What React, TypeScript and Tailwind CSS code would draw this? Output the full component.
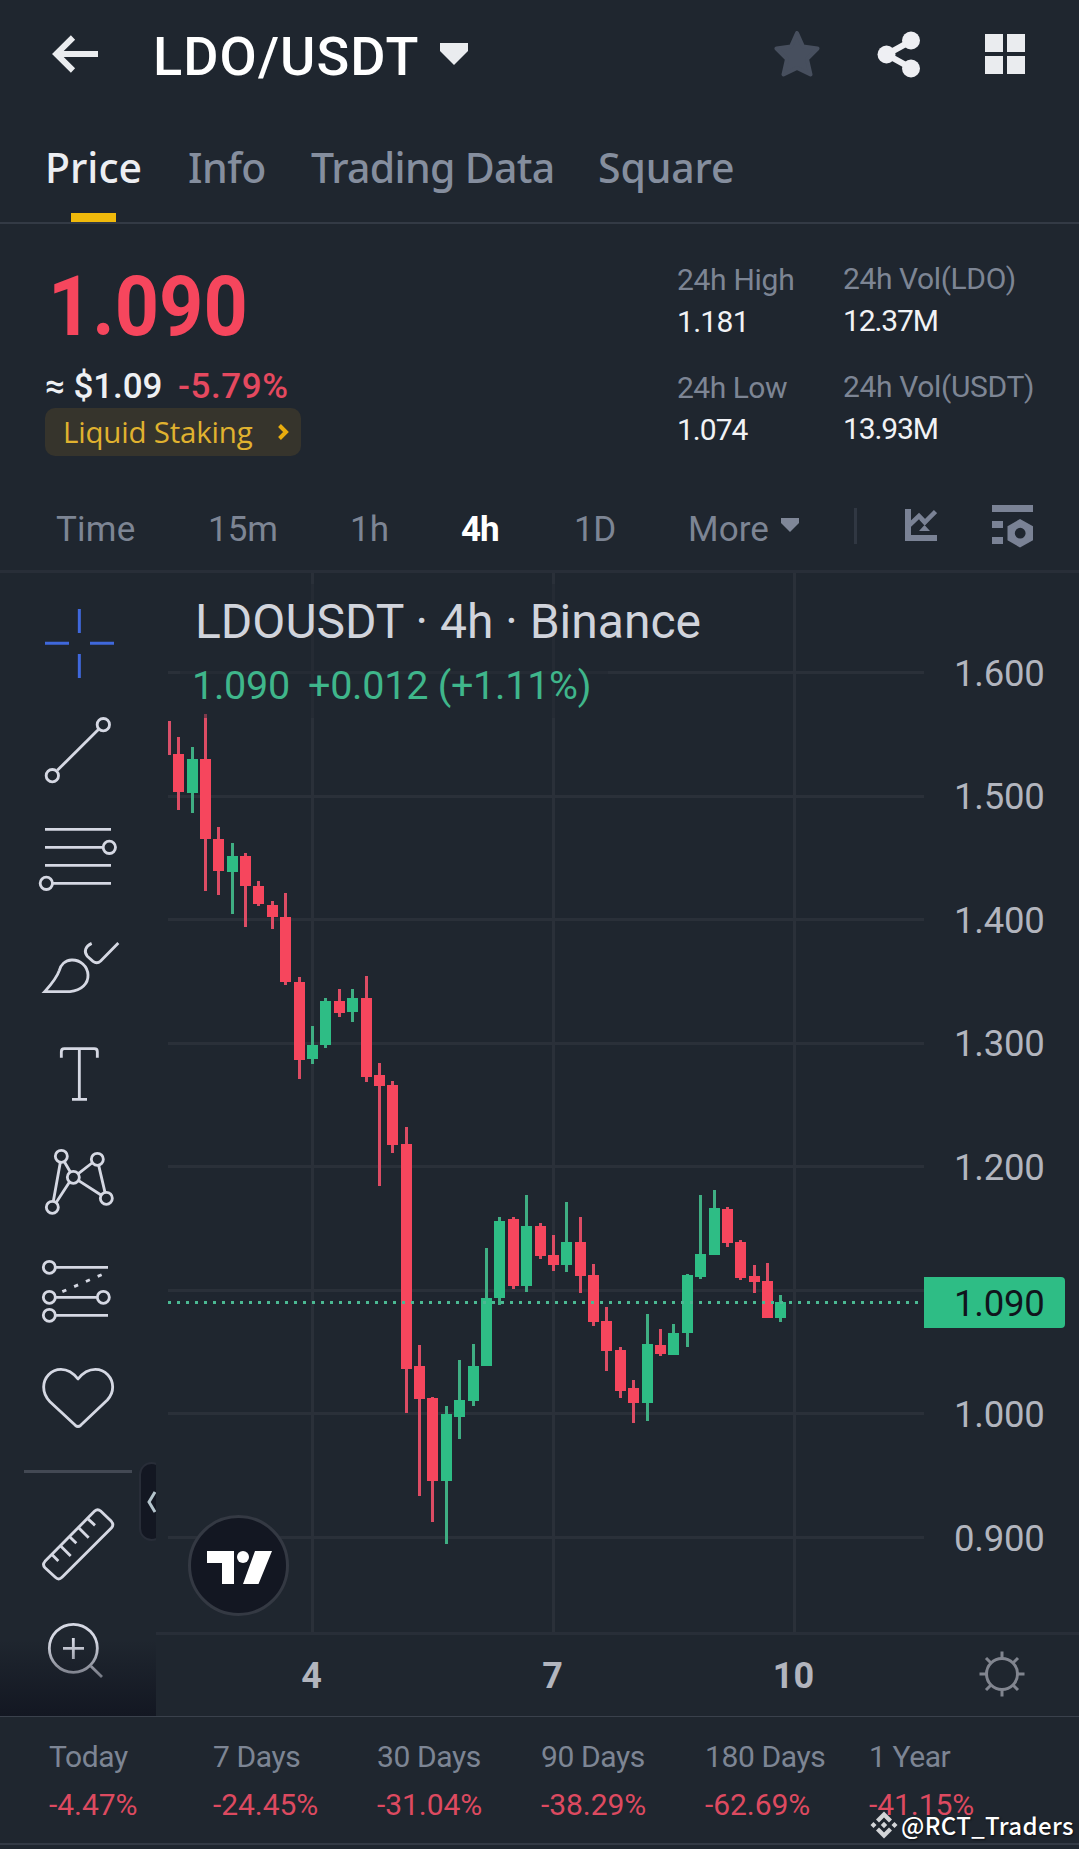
import React from 'react';

type Candle = [number, number, number, number, number, 'r' | 'g'];

// x centre, wick top, body top, body bottom, wick bottom, direction
const candles: Candle[] = [
  [178.5, 737, 754, 792, 810, 'r'], [192.5, 747, 759, 793, 813, 'g'], [205.5, 714, 759, 839, 891, 'r'],
  [218.5, 827, 839, 871, 895, 'r'], [232.5, 843, 856, 872, 914, 'g'], [245.5, 853, 856, 886, 927, 'r'],
  [258.5, 881, 886, 904, 906, 'r'], [272.5, 901, 905, 917, 929, 'r'], [285.5, 893, 917, 982, 985, 'r'],
  [299.5, 977, 982, 1060, 1079, 'r'], [312.5, 1026, 1045, 1059, 1064, 'g'], [325.5, 998, 1001, 1045, 1048, 'g'],
  [339.5, 989, 1001, 1013, 1017, 'r'], [352.5, 989, 998, 1012, 1022, 'g'], [366.5, 976, 998, 1077, 1082, 'r'],
  [379.5, 1063, 1075, 1086, 1186, 'r'], [392.5, 1081, 1085, 1145, 1153, 'r'], [406.5, 1127, 1144, 1369, 1413, 'r'],
  [419.5, 1345, 1366, 1399, 1496, 'r'], [432.5, 1397, 1398, 1481, 1522, 'r'], [446.5, 1406, 1414, 1481, 1544, 'g'],
  [459.5, 1360, 1400, 1417, 1439, 'g'], [473.5, 1344, 1366, 1401, 1406, 'g'], [486.5, 1248, 1298, 1366, 1366, 'g'],
  [499.5, 1217, 1221, 1298, 1305, 'g'], [513.5, 1217, 1219, 1286, 1289, 'r'], [526.5, 1195, 1226, 1286, 1292, 'g'],
  [540.5, 1223, 1226, 1256, 1259, 'r'], [553.5, 1235, 1255, 1265, 1271, 'r'], [566.5, 1202, 1242, 1265, 1272, 'g'],
  [580.5, 1217, 1242, 1276, 1293, 'r'], [593.5, 1264, 1275, 1322, 1326, 'r'], [606.5, 1307, 1321, 1351, 1371, 'r'],
  [620.5, 1347, 1350, 1391, 1398, 'r'], [633.5, 1380, 1388, 1403, 1423, 'r'], [647.5, 1314, 1344, 1403, 1421, 'g'],
  [660.5, 1329, 1345, 1354, 1356, 'r'], [673.5, 1324, 1333, 1355, 1355, 'g'], [687.5, 1274, 1275, 1333, 1347, 'g'],
  [700.5, 1195, 1254, 1277, 1279, 'g'], [714.5, 1190, 1208, 1255, 1255, 'g'], [727.5, 1207, 1209, 1243, 1247, 'r'],
  [740.5, 1240, 1242, 1278, 1280, 'r'], [754.5, 1265, 1276, 1282, 1293, 'r'], [767.5, 1263, 1281, 1318, 1318, 'r'],
  [780.5, 1295, 1302, 1318, 1322, 'g'],
];

const gridY = [672.5, 796.5, 919.5, 1043.5, 1166.5, 1290.5, 1413.5, 1537.5];
const gridX = [312.5, 553.5, 794.5];
const priceLabels = ['1.600', '1.500', '1.400', '1.300', '1.200', '', '1.000', '0.900'];

const periods = [
  ['Today', '-4.47%'], ['7 Days', '-24.45%'], ['30 Days', '-31.04%'],
  ['90 Days', '-38.29%'], ['180 Days', '-62.69%'], ['1 Year', '-41.15%'],
];

const Header = () => (
  <header className="flex h-[108px] items-center pl-[52px]">
    <svg className="h-[38px] w-[46px] shrink-0" viewBox="0 0 46 38" fill="none" stroke="#eaecef" strokeWidth="6">
      <path d="M46 19H5M21 2.500L4.300 19L21 35.500" />
    </svg>
    <h1 className="mt-[5px] ml-[55px] w-[287px] text-[54px] leading-none font-medium tracking-[1.1px] text-white">LDO/USDT</h1>
    <svg className="h-[22px] w-7 shrink-0" viewBox="0 0 28 22" fill="#eaecef"><path d="M0 0H28V8L14 22L0 8Z" /></svg>
    <svg className="ml-[306px] h-[47px] w-[46px] shrink-0" viewBox="0 0 46 47">
      <path d="M23 2L29 15.500L43.500 17.500L33 28L36.500 43.500L23 37L9.500 43.500L13 28L2.500 17.500L17 15.500Z" fill="#474f5e" stroke="#474f5e" strokeWidth="4" strokeLinejoin="round" />
    </svg>
    <svg className="ml-[57px] h-[47px] w-[43px] shrink-0" viewBox="0 0 43 47" fill="#eeeff3" stroke="#eeeff3">
      <path d="M34 10L9.500 23.500L34 37" fill="none" strokeWidth="6" />
      <circle cx="9.500" cy="23.500" r="9" stroke="none" />
      <circle cx="34" cy="9.500" r="9" stroke="none" />
      <circle cx="34" cy="37.500" r="9" stroke="none" />
    </svg>
    <div className="ml-[65px] grid grid-cols-2 gap-1">
      {[0, 1, 2, 3].map((i) => <span key={i} className="size-[18px] bg-[#eaecef]" />)}
    </div>
  </header>
);

const Tabs = () => (
  <nav className="flex h-[116px] items-center border-b-2 border-[#333a45] pt-1 pl-[45px] font-['Noto_Sans',sans-serif] text-[41px] leading-none font-medium text-[#858e9e]">
    <span className="w-[143px] text-[#eceef2]">Price</span>
    <span className="w-[123px] tracking-[-0.5px]">Info</span>
    <span className="w-[287px] tracking-[-0.7px]">Trading Data</span>
    <span className="tracking-[-0.15px]">Square</span>
  </nav>
);

const Stat = ({ label, value, labelClass, valueClass }: { label: string; value: string; labelClass: string; valueClass: string }) => (
  <div className="text-[30px] leading-[42px]">
    <div className={`text-[#7d8594] ${labelClass}`}>{label}</div>
    <div className={`text-[#f1f2f5] ${valueClass}`}>{value}</div>
  </div>
);

const PriceSummary = () => (
  <section className="flex h-[263px]">
    <div className="w-[677px] pt-[53px] pl-[45px]">
      <div className="ml-[3px] w-fit origin-left scale-x-[0.92] text-[84px] leading-[60px] font-bold text-[#f6465d]">1.090</div>
      <div className="mt-8 flex text-[35px] leading-9 font-medium">
        <span className="w-[133px] tracking-[-0.1px] text-[#eef0f3]">≈ $1.09</span>
        <span className="tracking-[0.6px] text-[#e5495f]">-5.79%</span>
      </div>
      <div className="mt-[3px] flex h-12 w-[256px] items-center rounded-[10px] bg-[#36342c]">
        <span className="ml-[18px] w-[215px] font-['Open_Sans',sans-serif] text-[29.5px] leading-none tracking-[-0.2px] text-[#e0b22f]">Liquid Staking</span>
        <svg className="h-4 w-[11px]" viewBox="0 0 11 16" fill="none" stroke="#e8ac0e" strokeWidth="4"><path d="M1.500 1.500L8 8L1.500 14.500" /></svg>
      </div>
    </div>
    <div className="flex w-[166px] flex-col gap-6 pt-[35px]">
      <Stat label="24h High" value="1.181" labelClass="tracking-[-0.3px]" valueClass="tracking-[-0.7px]" />
      <Stat label="24h Low" value="1.074" labelClass="tracking-[-0.5px]" valueClass="tracking-[-1px]" />
    </div>
    <div className="flex flex-col gap-6 pt-[34px]">
      <Stat label="24h Vol(LDO)" value="12.37M" labelClass="tracking-[-0.4px]" valueClass="tracking-[-1.1px]" />
      <Stat label="24h Vol(USDT)" value="13.93M" labelClass="tracking-[-0.35px]" valueClass="tracking-[-1.1px]" />
    </div>
  </section>
);

const Intervals = () => (
  <nav className="flex h-[86px] items-center border-b-[3px] border-[#282e38] pl-[56px] text-[35px] leading-none text-[#7d8594]">
    <span className="mt-[2px] w-[152px] tracking-[0.2px]">Time</span>
    <span className="mt-[2px] w-[142px]">15m</span>
    <span className="mt-[2px] w-[111px]">1h</span>
    <span className="mt-px w-[113px] font-bold tracking-[-1px] text-white">4h</span>
    <span className="mt-[2px] w-[114px] tracking-[-0.4px]">1D</span>
    <span className="mt-[2px] w-[93px] tracking-[0.1px]">More</span>
    <svg className="-mt-2 h-3.5 w-[18px]" viewBox="0 0 18 14" fill="#7f8798"><path d="M0 0H18V5L9 14L0 5Z" /></svg>
    <span className="-mt-1.5 ml-[55px] h-9 w-[3px] bg-[#303742]" />
    <svg className="-mt-[8px] ml-[48px] h-8 w-8" viewBox="0 0 32 32" fill="#7a8295">
      <path d="M0 0H6V26H32V32H0Z" />
      <path d="M4 16.500L14 7L20 13L30.500 2.500" fill="none" stroke="#7a8295" strokeWidth="4.500" />
      <path d="M14 10.500L24.500 11L19.500 16.500ZM19.500 16L25 22H14Z" />
    </svg>
    <svg className="-mt-1 ml-[55px] h-[43px] w-[42px]" viewBox="0 0 42 43" fill="#7a8295">
      <path d="M0 0H41V7H0ZM0 16H11V23H0ZM0 32H11V39H0Z" />
      <path fillRule="evenodd" d="M28 14L41 21.200V35.300L28 42.500L15.500 35.300V21.200ZM28.200 22.800A5.400 5.400 0 1 0 28.200 33.600A5.400 5.400 0 1 0 28.200 22.800Z" />
    </svg>
  </nav>
);

const Tool = ({ box, children }: { box: string; children: React.ReactNode }) => (
  <svg className="h-[108px] w-[156px] shrink-0" viewBox={box} fill="none" stroke="#d5d8e3" strokeWidth="8.500">{children}</svg>
);

const Toolbar = () => (
  <aside className="relative flex w-[156px] shrink-0 flex-col overflow-hidden pt-4">
    <Tool box="0 27 468 324">
      <path stroke="#3f68dc" strokeWidth="9" d="M238 87V159M238 222V294M135 190H207M270 190H342" />
    </Tool>
    <Tool box="0 351 468 324">
      <path d="M172 571L296 448" /><circle cx="157" cy="587" r="18.500" /><circle cx="310" cy="434" r="18.500" />
    </Tool>
    <Tool box="0 675 468 324">
      <path d="M135 748H333M135 802H309M135 856H333M158 910H333" /><circle cx="328" cy="802" r="18.500" /><circle cx="139" cy="910" r="18.500" />
    </Tool>
    <Tool box="0 999 468 324">
      <path d="M134 1235H210C245 1232 265 1210 264 1185C263 1158 240 1139 215 1140C195 1141 182 1155 178 1171C170 1195 150 1217 134 1235Z" />
      <path d="M275 1090C257 1098 250 1115 262 1129L279 1144Q291 1153 302 1143L355 1089" />
    </Tool>
    <Tool box="0 3 468 324">
      <path d="M184 113V95Q184 86 193 86H283Q292 86 292 95V113M238 86V238M216 238H261" />
    </Tool>
    <Tool box="0 327 468 324">
      <path d="M181 427L160 544M193 425L211 456M235 461L276 429M296 436L315 517M236 482L303 525M208 487L169 547" />
      <circle cx="184" cy="409" r="18" /><circle cx="292" cy="418" r="18" /><circle cx="220" cy="472" r="18" /><circle cx="157" cy="562" r="18" /><circle cx="319" cy="535" r="18" />
    </Tool>
    <Tool box="0 651 468 324">
      <path d="M168 742H324M168 832H290M168 886H324" /><path strokeDasharray="13 25.500" d="M187 815L312 761" />
      <circle cx="148" cy="742" r="18" /><circle cx="148" cy="832" r="18" /><circle cx="310" cy="832" r="18" /><circle cx="148" cy="886" r="18" />
    </Tool>
    <Tool box="0 975 468 324">
      <path strokeLinejoin="round" d="M234 1077C217 1055 201 1048 183 1048C153 1048 131 1073 131 1101C131 1119 138 1133 150 1145L226 1216Q234 1223 242 1216L322 1140C332 1129 338 1117 338 1101C338 1073 316 1048 286 1048C267 1048 251 1055 234 1077Z" />
    </Tool>
    <div className="mt-[17px] ml-6 h-[3px] w-[108px] shrink-0 bg-[#434954]" />
    <div className="h-[17px] shrink-0" />
    <Tool box="0 150 468 324">
      <path d="M284 213Q293 205 302 213L334 244Q343 254 334 264L186 412Q176 422 166 412L135 383Q126 374 135 364Z" />
      <path d="M155 343L175 363M182 318L212 348M209 290L229 310M236 263L266 293M263 236L285 256" />
    </Tool>
    <Tool box="0 474 468 324">
      <circle cx="220" cy="625" r="72" /><path d="M220 594V657M189 625H252M273 679L306 711" />
    </Tool>
    <div className="absolute bottom-0 left-0 h-[76px] w-full bg-gradient-to-b from-transparent to-[#131722]" />
    <div className="absolute top-[889px] -right-2 flex h-[79px] w-[25px] items-center justify-end rounded-[14px] border-2 border-[#282d38] bg-[#131722] pr-[6px]">
      <svg className="h-[22px] w-[9px]" viewBox="0 0 9 22" fill="none" stroke="#b4c4cc" strokeWidth="3"><path d="M8 1L2 11L8 21" /></svg>
    </div>
  </aside>
);

const Plot = () => (
  <div className="relative h-[1059px] w-[768px]">
    <svg className="block h-full w-full" viewBox="156 573 768 1059" shapeRendering="crispEdges">
      <g stroke="#2a3039" strokeWidth="3">
        {gridX.map((x) => <line key={x} x1={x} x2={x} y1="573" y2="1632" />)}
        {gridY.map((y) => <line key={y} x1="168" x2="924" y1={y} y2={y} />)}
      </g>
      <rect x="168" y="721" width="3" height="34" fill="#d9506a" />
      {candles.map(([x, wt, bt, bb, wb, d]) => (
        <g key={x}>
          <rect x={x - 1.5} y={wt} width="3" height={wb - wt} fill={d === 'g' ? '#3fae83' : '#dc4c64'} />
          <rect x={x - 5.5} y={bt} width="11" height={bb - bt} fill={d === 'g' ? '#2ebd85' : '#f6465d'} />
        </g>
      ))}
      <line x1="168" x2="924" y1="1302.500" y2="1302.500" stroke="#4bb993" strokeWidth="3" strokeDasharray="3 6" />
    </svg>
    <div className="absolute top-[11px] left-6 flex h-[134px] w-[428px] flex-col bg-[#1f262f]/50 pl-[15px]">
      <div className="mt-[10px] text-[48px] leading-[56px] whitespace-nowrap text-[#d1d4dc]">LDOUSDT · 4h · Binance</div>
      <div className="mt-[12px] -ml-[3px] flex text-[39.5px] leading-[48px] tracking-[-0.25px] text-[#3fb68b]">
        <span className="w-[116px]">1.090</span>
        <span className="whitespace-nowrap">+0.012 (+1.11%)</span>
      </div>
    </div>
    <div className="absolute top-[942px] left-8 flex size-[101px] items-center justify-center rounded-full border-[3px] border-[#343943] bg-[#131722]">
      <svg className="mt-[3px] ml-[2px] h-[33px] w-[65px]" viewBox="0 0 65 33" fill="#fff">
        <path d="M0 0H27V33H15V12H0ZM48 0H65L51.500 33H36Z" /><circle cx="36" cy="6" r="6" />
      </svg>
    </div>
  </div>
);

const Chart = () => (
  <section className="flex h-[1143px]">
    <Toolbar />
    <div className="flex-1">
      <div className="flex border-b-[3px] border-[#282e38]">
        <Plot />
        <div className="relative flex-1 pt-[39px] text-[36.5px] tracking-[-0.2px] text-[#b2b5be]">
          {priceLabels.map((p, i) => <div key={i} className="flex h-[123.6px] items-center pl-[30px] leading-none">{p}</div>)}
          <div className="absolute top-[704px] left-0 flex h-[51px] w-[141px] items-center rounded-r-[4px] bg-[#2ebd85] pt-[3px] pl-[30px] leading-none text-[#10141c]">1.090</div>
        </div>
      </div>
      <div className="flex h-[81px] items-center pl-[35px] text-[36px] leading-none font-bold text-[#b2b5be]">
        {['4', '7', '10'].map((d) => <span key={d} className="w-[241px] text-center">{d}</span>)}
        <svg className="-mt-1 ml-[65px] size-[46px]" viewBox="-23 -23 46 46" fill="none" stroke="#81858f" strokeWidth="3">
          <circle r="15.500" />
          <path d="M0 -15V-22.500M0 15V22.500M-15 0H-22.500M15 0H22.500M-10.500 -10.500L-16 -16M10.500 -10.500L16 -16M-10.500 10.500L-16 16M10.500 10.500L16 16" />
        </svg>
      </div>
    </div>
  </section>
);

const Performance = () => (
  <footer className="flex h-[129px] border-t border-b-2 border-t-[#3a414c] border-b-[#333a45] pt-4 pl-[49px] text-[30px] leading-[48px]">
    {periods.map(([label, value]) => (
      <div key={label} className="w-[164px]">
        <div className="tracking-[-0.4px] text-[#7d8594]">{label}</div>
        <div className="tracking-[-0.05px] text-[#dd4a60]">{value}</div>
      </div>
    ))}
  </footer>
);

const Watermark = () => (
  <div className="absolute top-[1809px] left-[870px] flex h-8 items-center">
    <svg className="size-[28px]" viewBox="0 0 28 28" fill="#d3d5d8">
      <path d="M14 0.500L22 8.500L19 11.500L14 6.500L9 11.500L6 8.500ZM14 27.500L22 19.500L19 16.500L14 21.500L9 16.500L6 19.500ZM14 10.800L17.200 14L14 17.200L10.800 14ZM3.500 11L6.500 14L3.500 17L0.500 14ZM24.500 11L27.500 14L24.500 17L21.500 14Z" />
    </svg>
    <span className="ml-[3px] font-['Noto_Sans_CJK_SC',sans-serif] text-[24px] leading-none font-medium tracking-[0.35px] text-white [text-shadow:1px_1px_2px_rgba(0,0,0,0.6)]">@RCT_Traders</span>
  </div>
);

export default function App() {
  return (
    <main className="relative h-[1849px] w-[1079px] overflow-hidden bg-[#1f262f] font-['Roboto',sans-serif]">
      <Header />
      <div className="relative">
        <Tabs />
        <div className="absolute bottom-[2px] left-[71px] h-[9px] w-[45px] bg-[#f0b90b]" />
      </div>
      <PriceSummary />
      <Intervals />
      <Chart />
      <Performance />
      <Watermark />
    </main>
  );
}
